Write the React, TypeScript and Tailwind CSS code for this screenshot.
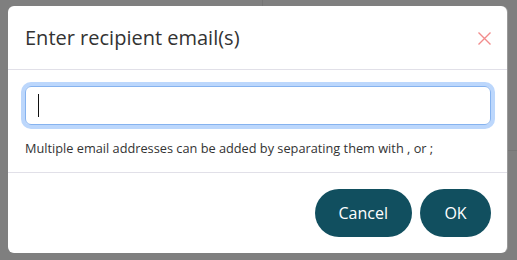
export default function App() {
  return (
    <div className="relative w-full h-[260px] bg-[#7f7f7f] pt-[6px] pl-[8px] font-['Open_Sans',sans-serif] overflow-hidden">
      {/* page behind the overlay */}
      <div className="absolute left-[262px] top-0 w-px h-[6px] bg-[#767676]" />
      <div className="absolute left-[508px] top-[150px] w-[9px] h-px bg-[#767676]" />

      <div className="relative w-[499px] h-[247px] bg-white rounded-[6px] flex flex-col shadow-[1px_0_0_#9a9a9a]">
        {/* Header */}
        <div className="h-[64px] flex items-center justify-between pl-[17px] pr-[16px] border-b border-[#e1e0e8]">
          <h2 className="text-[20px] text-[#333333] leading-none mt-[1px]">Enter recipient email(s)</h2>
          <button className="w-[13px] h-[13px] mt-[1px]" aria-label="Close">
            <svg viewBox="0 0 13 13" className="w-[13px] h-[13px]" fill="none" stroke="#f28c8c" strokeWidth="1.4">
              <path d="M0.5 0.5 L12.5 12.5 M12.5 0.5 L0.5 12.5" />
            </svg>
          </button>
        </div>

        {/* Body */}
        <div className="pl-[17px] pr-[16px] pt-[16px] pb-[15px] border-b border-[#e1e0e8]">
          <div className="h-[39px] flex items-center pl-[12px] border border-[#86b3ef] rounded-[6px] shadow-[0_0_0_4px_#bcd7fc]">
            <span className="w-px h-[23px] bg-[#111111]" />
          </div>
          <p className="mt-[14px] text-[12.75px] leading-[18px] text-[#333333]">
            Multiple email addresses can be added by separating them with , or ;
          </p>
        </div>

        {/* Footer */}
        <div className="flex justify-end gap-[8px] pt-[16px] pr-[16px]">
          <button className="h-[48px] px-[24px] rounded-full bg-[#114f5f] text-white text-[16px]">Cancel</button>
          <button className="h-[48px] w-[71px] rounded-full bg-[#114f5f] text-white text-[16px]">OK</button>
        </div>
      </div>
    </div>
  );
}
